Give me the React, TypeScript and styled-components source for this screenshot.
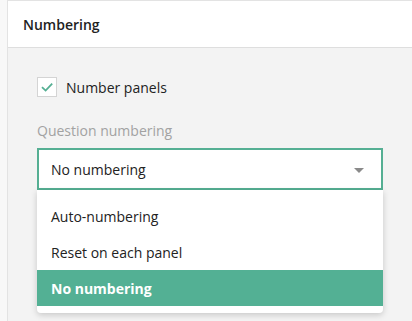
import React, { useState } from 'react'
import styled, { createGlobalStyle } from 'styled-components'

const GlobalStyle = createGlobalStyle`
    html, body {
        margin: 0;
        padding: 0;
        background: #f8f8f8;
    }
    body {
        font-family: 'Open Sans', 'Noto Sans', sans-serif;
        color: #1f1f1f;
    }
`

const Page = styled.div`
    display: flex;
    height: 321px;
    overflow: hidden;
`

const SideGutter = styled.div`
    width: 7px;
    flex-shrink: 0;
    background: #f8f8f8;
    border-right: 1px solid #e3e3e3;
`

const Panel = styled.div`
    flex: 1;
    display: flex;
    flex-direction: column;
    border-top: 1px solid #e3e3e3;
    background: #f3f3f3;
`

const PanelHeader = styled.div`
    height: 46px;
    display: flex;
    align-items: center;
    padding: 0 15px;
    background: #fff;
    border-bottom: 1px solid #dedede;
    font-size: 14px;
    font-weight: 600;
    color: #222;
`

const PanelBody = styled.div`
    display: flex;
    flex-direction: column;
    padding: 29px 29px 0 29px;
`

const CheckRow = styled.label`
    display: flex;
    align-items: center;
    gap: 9px;
    font-size: 14px;
    color: #222;
    cursor: pointer;
`

const CheckBox = styled.span`
    width: 18px;
    height: 18px;
    border: 1px solid #d4d4d4;
    background: #fff;
    display: flex;
    align-items: center;
    justify-content: center;
`

const FieldLabel = styled.div`
    margin-top: 24px;
    font-size: 14px;
    color: #a2a2a2;
`

const SelectWrap = styled.div`
    position: relative;
    margin-top: 8px;
`

const SelectBox = styled.div`
    height: 38px;
    border: 2px solid #55af93;
    background: #fff;
    display: flex;
    align-items: center;
    justify-content: space-between;
    padding: 0 17px 0 12px;
    font-size: 14px;
    color: #222;
`

const Arrow = styled.span`
    width: 0;
    height: 0;
    border-left: 5px solid transparent;
    border-right: 5px solid transparent;
    border-top: 5px solid #8a8a8a;
    margin-top: 2px;
`

const Menu = styled.ul`
    position: absolute;
    left: 0;
    right: 0;
    top: 100%;
    margin: 0;
    padding: 8px 0 7px;
    list-style: none;
    background: #fff;
    border-radius: 0 0 4px 4px;
    box-shadow: 0 2px 6px rgba(0, 0, 0, 0.18);
`

const MenuItem = styled.li<{ $selected?: boolean }>`
    height: 36px;
    display: flex;
    align-items: center;
    padding: 0 14px;
    font-size: 14px;
    font-weight: ${({ $selected }) => ($selected ? 700 : 400)};
    color: ${({ $selected }) => ($selected ? '#fff' : '#222')};
    background: ${({ $selected }) => ($selected ? '#53b094' : 'transparent')};
    cursor: pointer;
`

const options = ['Auto-numbering', 'Reset on each panel', 'No numbering']

const App = () => {
    const [value, setValue] = useState('No numbering')

    return (
        <Page>
            <GlobalStyle />
            <SideGutter />
            <Panel>
                <PanelHeader>Numbering</PanelHeader>
                <PanelBody>
                    <CheckRow>
                        <CheckBox>
                            <svg width="14" height="14" viewBox="0 0 14 14">
                                <path
                                    d="M2 7.2 L5.6 10.6 L12.2 3.6"
                                    fill="none"
                                    stroke="#55af93"
                                    strokeWidth="1.8"
                                />
                            </svg>
                        </CheckBox>
                        Number panels
                    </CheckRow>
                    <FieldLabel>Question numbering</FieldLabel>
                    <SelectWrap>
                        <SelectBox>
                            {value}
                            <Arrow />
                        </SelectBox>
                        <Menu>
                            {options.map(option => (
                                <MenuItem
                                    key={option}
                                    $selected={option === value}
                                    onClick={() => setValue(option)}
                                >
                                    {option}
                                </MenuItem>
                            ))}
                        </Menu>
                    </SelectWrap>
                </PanelBody>
            </Panel>
        </Page>
    )
}

export default App
